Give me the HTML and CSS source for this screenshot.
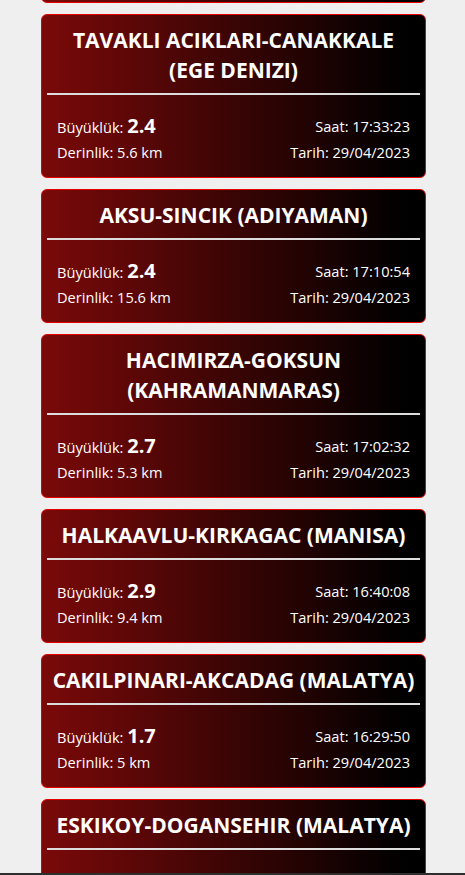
FILE: index.html
```html
<!DOCTYPE html>
<html lang="tr">
<head>
<meta charset="utf-8">
<title>Son Depremler</title>
<link rel="stylesheet" href="styles.css">
</head>
<body>
<main class="feed">
  <article class="card">
    <h2 class="title">YENIKOY-AKCADAG (MALATYA)</h2>
    <hr class="rule">
    <div class="info">
      <div class="col"><p>Büyüklük: <strong>1.9</strong></p><p>Derinlik: 7.1 km</p></div>
      <div class="col right"><p>Saat: 17:41:02</p><p>Tarih: 29/04/2023</p></div>
    </div>
  </article>
  <article class="card">
    <h2 class="title">TAVAKLI ACIKLARI-CANAKKALE (EGE DENIZI)</h2>
    <hr class="rule">
    <div class="info">
      <div class="col"><p>Büyüklük: <strong>2.4</strong></p><p>Derinlik: 5.6 km</p></div>
      <div class="col right"><p>Saat: 17:33:23</p><p>Tarih: 29/04/2023</p></div>
    </div>
  </article>
  <article class="card">
    <h2 class="title">AKSU-SINCIK (ADIYAMAN)</h2>
    <hr class="rule">
    <div class="info">
      <div class="col"><p>Büyüklük: <strong>2.4</strong></p><p>Derinlik: 15.6 km</p></div>
      <div class="col right"><p>Saat: 17:10:54</p><p>Tarih: 29/04/2023</p></div>
    </div>
  </article>
  <article class="card">
    <h2 class="title">HACIMIRZA-GOKSUN (KAHRAMANMARAS)</h2>
    <hr class="rule">
    <div class="info">
      <div class="col"><p>Büyüklük: <strong>2.7</strong></p><p>Derinlik: 5.3 km</p></div>
      <div class="col right"><p>Saat: 17:02:32</p><p>Tarih: 29/04/2023</p></div>
    </div>
  </article>
  <article class="card">
    <h2 class="title">HALKAAVLU-KIRKAGAC (MANISA)</h2>
    <hr class="rule">
    <div class="info">
      <div class="col"><p>Büyüklük: <strong>2.9</strong></p><p>Derinlik: 9.4 km</p></div>
      <div class="col right"><p>Saat: 16:40:08</p><p>Tarih: 29/04/2023</p></div>
    </div>
  </article>
  <article class="card">
    <h2 class="title">CAKILPINARI-AKCADAG (MALATYA)</h2>
    <hr class="rule">
    <div class="info">
      <div class="col"><p>Büyüklük: <strong>1.7</strong></p><p>Derinlik: 5 km</p></div>
      <div class="col right"><p>Saat: 16:29:50</p><p>Tarih: 29/04/2023</p></div>
    </div>
  </article>
  <article class="card">
    <h2 class="title">ESKIKOY-DOGANSEHIR (MALATYA)</h2>
    <hr class="rule">
    <div class="info">
      <div class="col"><p>Büyüklük: <strong>1.6</strong></p><p>Derinlik: 7 km</p></div>
      <div class="col right"><p>Saat: 16:12:41</p><p>Tarih: 29/04/2023</p></div>
    </div>
  </article>
</main>
<div class="bottom-bar"></div>
</body>
</html>
```
FILE: styles.css
```css
html, body {
  margin: 0;
  padding: 0;
  background: #efefef;
  font-family: "Open Sans", "Noto Sans", sans-serif;
  color: #fff;
}

.feed {
  display: flex;
  flex-direction: column;
  gap: 11px;
  width: 385px;
  margin: -131px auto 0 41px;
}

.card {
  box-sizing: border-box;
  border: 1px solid #e40000;
  border-radius: 6px;
  background: linear-gradient(to right, #7b0909 0%, #000 95%);
  overflow: hidden;
}

.title {
  margin: 0;
  padding: 10px 8px 8px;
  font-size: 21px;
  line-height: 30px;
  font-weight: 700;
  text-align: center;
}

.rule {
  margin: 0 5px;
  border: 0;
  border-top: 2px solid #dcdcdc;
  height: 0;
}

.info {
  display: flex;
  justify-content: space-between;
  padding: 18px 15px 12px;
  font-size: 14.6px;
}

.col p {
  margin: 0;
  line-height: 26px;
  height: 26px;
}

.col strong {
  font-size: 20px;
  font-weight: 700;
}

.right {
  text-align: right;
}

.bottom-bar {
  position: fixed;
  left: 0;
  right: 0;
  bottom: 0;
  height: 2px;
  background: #2e2e2e;
}
```
